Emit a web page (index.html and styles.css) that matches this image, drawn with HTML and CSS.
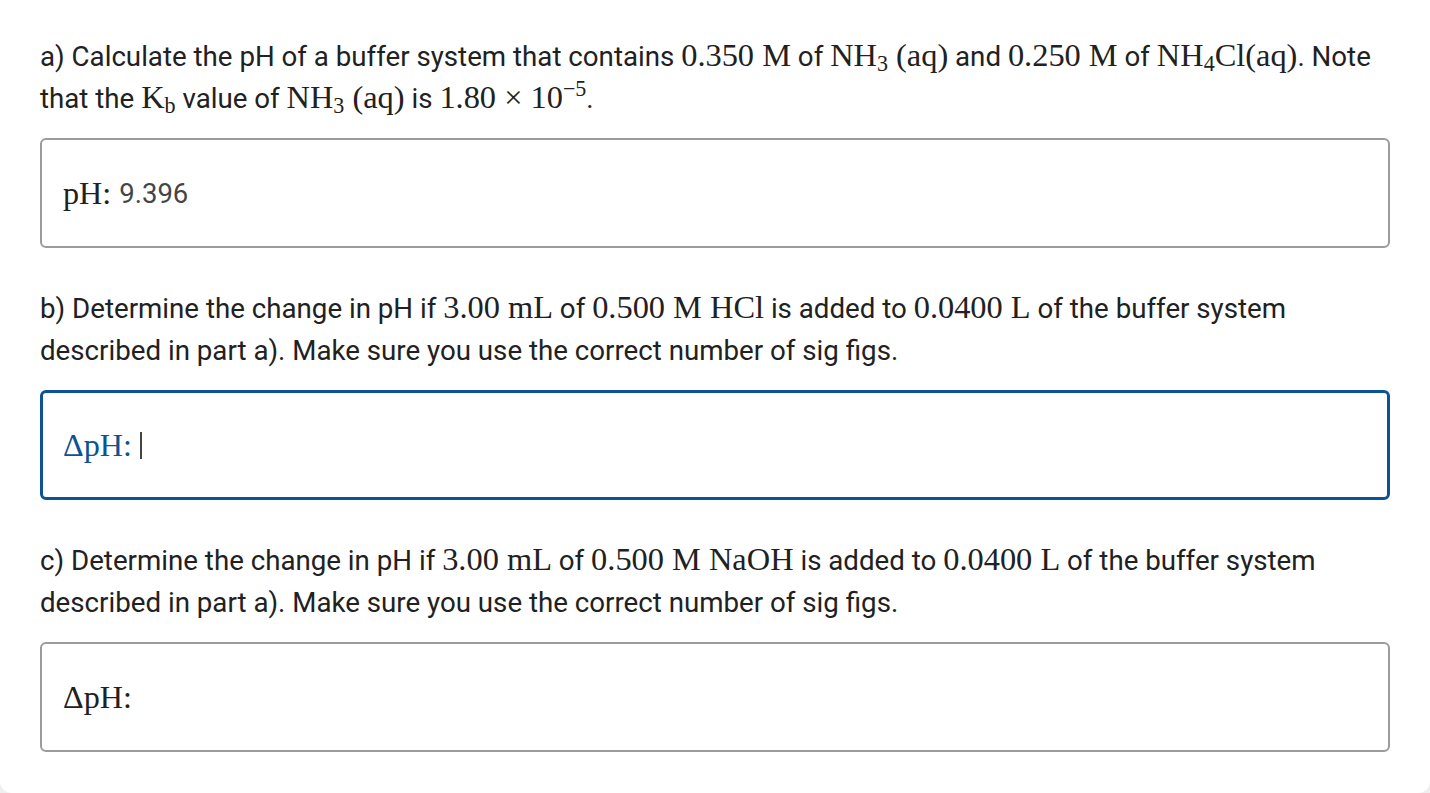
FILE: index.html
```html
<!DOCTYPE html>
<html>
<head>
<meta charset="utf-8">
<link rel="stylesheet" href="styles.css">
</head>
<body>
<div class="card">
  <section class="part">
    <p class="q">a) Calculate the pH of a buffer system that contains <span class="m">0.350 M</span> of <span class="m">NH<sub>3</sub> (aq)</span> and <span class="m">0.250 M</span> of <span class="m">NH<sub>4</sub>Cl(aq)</span>. Note that the <span class="m">K<sub>b</sub></span> value of <span class="m">NH<sub>3</sub> (aq)</span> is <span class="m">1.80 × 10<sup>−5</sup></span>.</p>
    <div class="answer">
      <span class="m label">pH:</span><span class="val">9.396</span>
    </div>
  </section>
  <section class="part">
    <p class="q">b) Determine the change in pH if <span class="m">3.00 mL</span> of <span class="m">0.500 M HCl</span> is added to <span class="m">0.0400 L</span> of the buffer system described in part a). Make sure you use the correct number of sig figs.</p>
    <div class="answer active">
      <span class="m label">ΔpH:</span><span class="caret"></span>
    </div>
  </section>
  <section class="part">
    <p class="q">c) Determine the change in pH if <span class="m">3.00 mL</span> of <span class="m">0.500 M NaOH</span> is added to <span class="m">0.0400 L</span> of the buffer system described in part a). Make sure you use the correct number of sig figs.</p>
    <div class="answer">
      <span class="m label">ΔpH:</span>
    </div>
  </section>
</div>
</body>
</html>
```
FILE: styles.css
```css
html, body {
  margin: 0;
  padding: 0;
}
body {
  background: #efefef;
  font-family: Roboto, "Liberation Sans", sans-serif;
  color: #212121;
}
.card {
  background: #fff;
  width: 1430px;
  height: 793px;
  box-sizing: border-box;
  padding: 36px 40px 0 40px;
  border-radius: 0 0 12px 12px;
  display: flex;
  flex-direction: column;
  gap: 40px;
}
.part {
  display: flex;
  flex-direction: column;
  gap: 18px;
}
.q {
  margin: 0;
  font-size: 27.7px;
  line-height: 42px;
}
.m {
  font-family: "Liberation Serif", "Times New Roman", serif;
  font-size: 1.17em;
  line-height: 1;
}
.m sub, .m sup {
  font-size: 0.68em;
  line-height: 0;
}
.m sub {
  vertical-align: -0.22em;
}
.m sup {
  vertical-align: 0.55em;
}
.answer {
  height: 110px;
  box-sizing: border-box;
  border: 2px solid #9b9b9b;
  border-radius: 6px;
  display: flex;
  align-items: center;
  padding: 0 21px;
  font-size: 27.5px;
}
.answer.active {
  border: 3px solid #0b5394;
  padding-left: 20px;
}
.label {
  color: #212121;
  margin-right: 8px;
}
.active .label {
  color: #0b5394;
}
.val {
  color: #454545;
}
.caret {
  width: 2px;
  height: 27px;
  background: #444;
  display: inline-block;
}
```
